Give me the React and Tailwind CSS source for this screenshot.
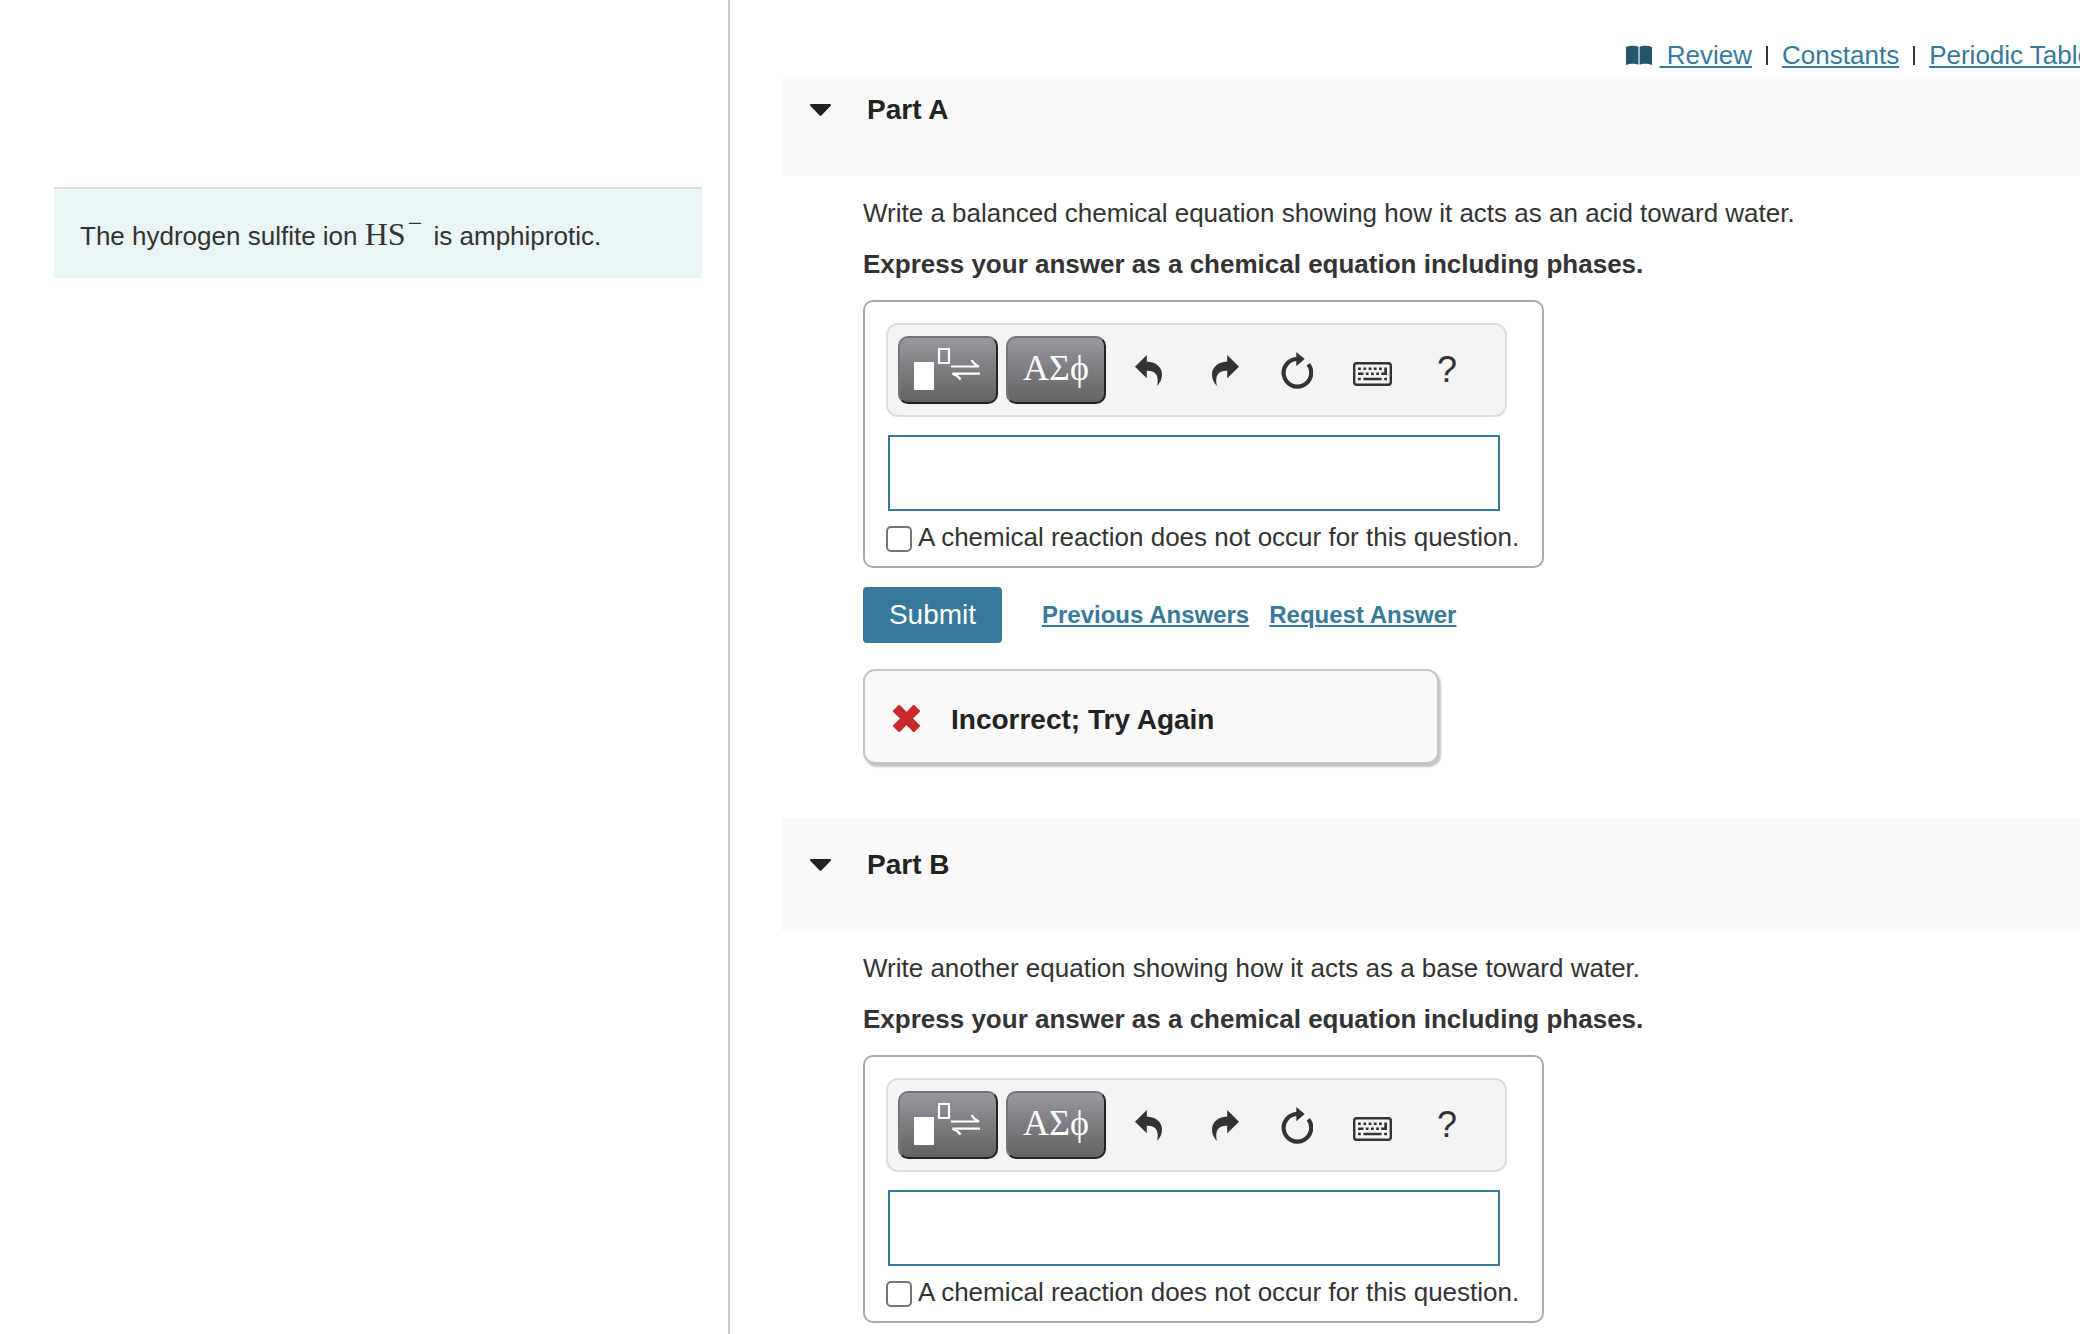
function BookIcon() {
  return (
    <svg width="26" height="21" viewBox="0 0 26 21" fill="#24566b" aria-hidden="true">
      <path d="M0 2C3.500 .3 9 .3 12 1.800V19.600C9 18.400 3.500 18.600 0 20Z" />
      <path d="M26 2C22.500 .3 17 .3 14 1.800V19.600C17 18.400 22.500 18.600 26 20Z" />
      <path d="M12 1.800h2v17.800h-2z" fill="#9fb5be" />
    </svg>
  );
}

function Caret() {
  return (
    <svg width="21" height="12" viewBox="0 0 21 12" fill="#222" aria-hidden="true">
      <path d="M1.200 0H19.800C21 0 21.300 1.200 20.500 2L11.600 11.200C11 11.900 10 11.900 9.400 11.200L.5 2C-.3 1.200 0 0 1.200 0Z" />
    </svg>
  );
}

function TemplateIcon() {
  return (
    <svg width="68" height="44" viewBox="0 1 68 44" fill="none" aria-hidden="true">
      <path d="M0 15h20v28H0z" fill="#fff" />
      <path d="M25 2h10v14H25z" stroke="#fff" strokeWidth="2.200" />
      <path d="M37 19.500H65C62 18.500 59.500 16.200 57.600 13.200" stroke="#fff" strokeWidth="2.200" />
      <path d="M66 26.600H38.500C42 27.800 44.600 29.800 46.500 32.600" stroke="#fff" strokeWidth="2.200" />
    </svg>
  );
}

function UndoIcon() {
  return (
    <svg width="30" height="31" viewBox="-3 0 30 31" fill="#333" aria-hidden="true">
      <path d="M0 11.700 11.800 0V6.500C21 7 27 12 27 19.500C27 24 25.300 27.500 22.200 31C24 21 21.500 15.600 11.800 15.800V23.300Z" />
    </svg>
  );
}

function RedoIcon() {
  return (
    <svg width="33" height="31" viewBox="-6 0 33 31" fill="#333" aria-hidden="true">
      <path d="M27 11.700 15.200 0V6.500C6 7 0 12 0 19.500C0 24 1.700 27.500 4.800 31C3 21 5.500 15.600 15.200 15.800V23.300Z" />
    </svg>
  );
}

function ResetIcon() {
  return (
    <svg width="32" height="37" viewBox="0 0 32 37" aria-hidden="true">
      <path d="M17 7A13.800 13.800 0 1 0 27.300 12.300" fill="none" stroke="#333" strokeWidth="4.200" />
      <path d="M15.300 0 23.700 7 15.300 14.200Z" fill="#333" />
    </svg>
  );
}

function KeyboardIcon() {
  return (
    <svg width="39" height="24" viewBox="0 0 39 24" aria-hidden="true">
      <rect x="1.200" y="1.200" width="36.600" height="21.600" rx="2.500" fill="none" stroke="#333" strokeWidth="2.400" />
      <g fill="#333">
        <path d="M5 5.400h2.800v2.500H5zM10.400 5.400h2.800v2.500h-2.800zM15.600 5.400h2.800v2.500h-2.800zM20.800 5.400h2.800v2.500h-2.800zM26 5.400h2.800v2.500H26zM31.300 5.400h2.700v7.500h-5.800v-2.500h3.100z" />
        <path d="M5 10.400h5.500v2.500H5zM12.800 10.400h2.800v2.500h-2.800zM18 10.400h2.800v2.500H18zM23.200 10.400h2.800v2.500h-2.800z" />
        <path d="M5 15.700h2.800v2.500H5zM10.400 15.700h18.200v2.500H10.400zM31.200 15.700H34v2.500h-2.800z" />
      </g>
    </svg>
  );
}

function CrossIcon() {
  return (
    <svg width="27" height="27" viewBox="0 0 27 27" fill="#c9282d" stroke="#c9282d" strokeWidth="2.400" strokeLinejoin="round" aria-hidden="true">
      <path d="M1.200 6.200 6.200 1.200 13.500 8.600 20.800 1.200 25.800 6.200 18.400 13.500 25.800 20.800 20.800 25.800 13.500 18.400 6.200 25.800 1.200 20.800 8.600 13.500Z" />
    </svg>
  );
}

const link = "text-[#37799b] underline decoration-2 underline-offset-2";
const padButton =
  "flex h-17 w-25 items-center justify-center rounded-[10px] border-2 border-t-[#767676] border-l-[#767676] border-r-[#222] border-b-[#222] bg-linear-to-b from-[#99979f] to-[#636363] text-white";
const iconButton = "flex w-10 items-center justify-center";

function AnswerBox({ id }) {
  return (
    <div className="mt-[21px] w-[681px] max-w-full rounded-[10px] border-2 border-[#aaa] px-[21px] pt-[21px] pb-[14px]">
      <div className="mr-[14px] flex h-[94px] items-center rounded-xl border-2 border-[#ddd] bg-[#f4f4f4] pl-[10px]">
        <button type="button" aria-label="Templates" className={padButton}>
          <TemplateIcon />
        </button>
        <button type="button" aria-label="Symbols" className={`${padButton} ml-2 pb-1 font-['Liberation_Serif',serif] text-[36px]`}>
          ΑΣϕ
        </button>
        <div className="ml-[21px] flex items-center gap-[35px]">
          <button type="button" aria-label="Undo" className={iconButton}>
            <UndoIcon />
          </button>
          <button type="button" aria-label="Redo" className={iconButton}>
            <RedoIcon />
          </button>
          <button type="button" aria-label="Reset" className={iconButton}>
            <ResetIcon />
          </button>
          <button type="button" aria-label="Keyboard" className={`${iconButton} pt-2`}>
            <KeyboardIcon />
          </button>
          <button type="button" aria-label="Help" className={`${iconButton} text-[36px] leading-[36px]`}>
            ?
          </button>
        </div>
      </div>
      <input
        type="text"
        aria-label="Answer"
        className="mt-[18px] ml-[2px] block h-[76px] w-[612px] max-w-full border-2 border-[#37799b] px-3 outline-none"
      />
      <div className="mt-[11px] flex items-end gap-[6px]">
        <input
          id={id}
          type="checkbox"
          className="size-[26px] shrink-0 appearance-none rounded-[5px] border-2 border-[#767676] bg-white checked:bg-[#37799b]"
        />
        <label htmlFor={id} className="whitespace-nowrap">
          A chemical reaction does not occur for this question.
        </label>
      </div>
    </div>
  );
}

function PartHeader({ title, className }) {
  return (
    <h2 className={`bg-[#f9f9f9] pb-[50px] pl-7 text-[28px] leading-8 font-bold text-[#222] ${className}`}>
      <button type="button" className="flex items-center gap-9">
        <Caret />
        {title}
      </button>
    </h2>
  );
}

function Prompt({ children }) {
  return (
    <>
      <p className="pt-[22px]">{children}</p>
      <p className="mt-[21px] font-bold">Express your answer as a chemical equation including phases.</p>
    </>
  );
}

export default function App() {
  return (
    <div className="flex min-h-screen overflow-hidden bg-white font-['Liberation_Sans',Arial,sans-serif] text-[26px] leading-[30px] text-[#333]">
      <aside className="w-[35%] shrink-0 pt-[187px] pr-[26px] pl-[54px]">
        <p className="border-t-2 border-[#ddd] bg-[#e9f5f7] pt-8 pr-6 pb-[27px] pl-[26px]">
          The hydrogen sulfite ion <span className="font-['Liberation_Serif',serif] text-[32px] leading-[26px]">HS</span>
          <sup className="mr-1 ml-0.5 font-['Liberation_Serif',serif] text-[26px]">−</sup> is amphiprotic.
        </p>
      </aside>
      <main className="min-w-0 flex-1 border-l-2 border-[#c0cbd9] pl-[52px]">
        <nav className="-mr-3 flex items-center justify-end gap-[14px] pt-10 pb-[9px] whitespace-nowrap">
          <span className="flex items-center gap-2">
            <BookIcon />
            <a href="#review" className={`${link} whitespace-pre`}>
              {" Review"}
            </a>
          </span>
          <span className="h-[19px] w-[2px] bg-[#333]" />
          <a href="#constants" className={link}>Constants</a>
          <span className="h-[19px] w-[2px] bg-[#333]" />
          <a href="#periodic-table" className={link}>Periodic Table</a>
        </nav>

        <section>
          <PartHeader title="Part A" className="pt-[15px]" />
          <div className="pl-[81px]">
            <Prompt>Write a balanced chemical equation showing how it acts as an acid toward water.</Prompt>
            <AnswerBox id="no-reaction-a" />
            <div className="mt-[19px] flex items-center">
              <button type="button" className="h-14 w-[139px] rounded-[4px] bg-[#37799b] text-[28px] text-white">
                Submit
              </button>
              <a href="#previous" className={`${link} ml-10 text-[24px] font-bold`}>Previous Answers</a>
              <a href="#request" className={`${link} ml-5 text-[24px] font-bold`}>Request Answer</a>
            </div>
            <div className="mt-[26px] w-[576px] max-w-full rounded-xl border-2 border-[#c6c6c6] bg-[#f9f9f9] pt-[34px] pb-[27px] pl-7 text-[28px] text-[#222] shadow-[2px_3px_2px_#c6c6c6]">
              <p className="flex gap-[31px] font-bold">
                <CrossIcon />
                Incorrect; Try Again
              </p>
            </div>
          </div>
        </section>

        <section className="mt-[54px]">
          <PartHeader title="Part B" className="pt-[31px]" />
          <div className="pl-[81px]">
            <Prompt>Write another equation showing how it acts as a base toward water.</Prompt>
            <AnswerBox id="no-reaction-b" />
          </div>
        </section>
      </main>
    </div>
  );
}
